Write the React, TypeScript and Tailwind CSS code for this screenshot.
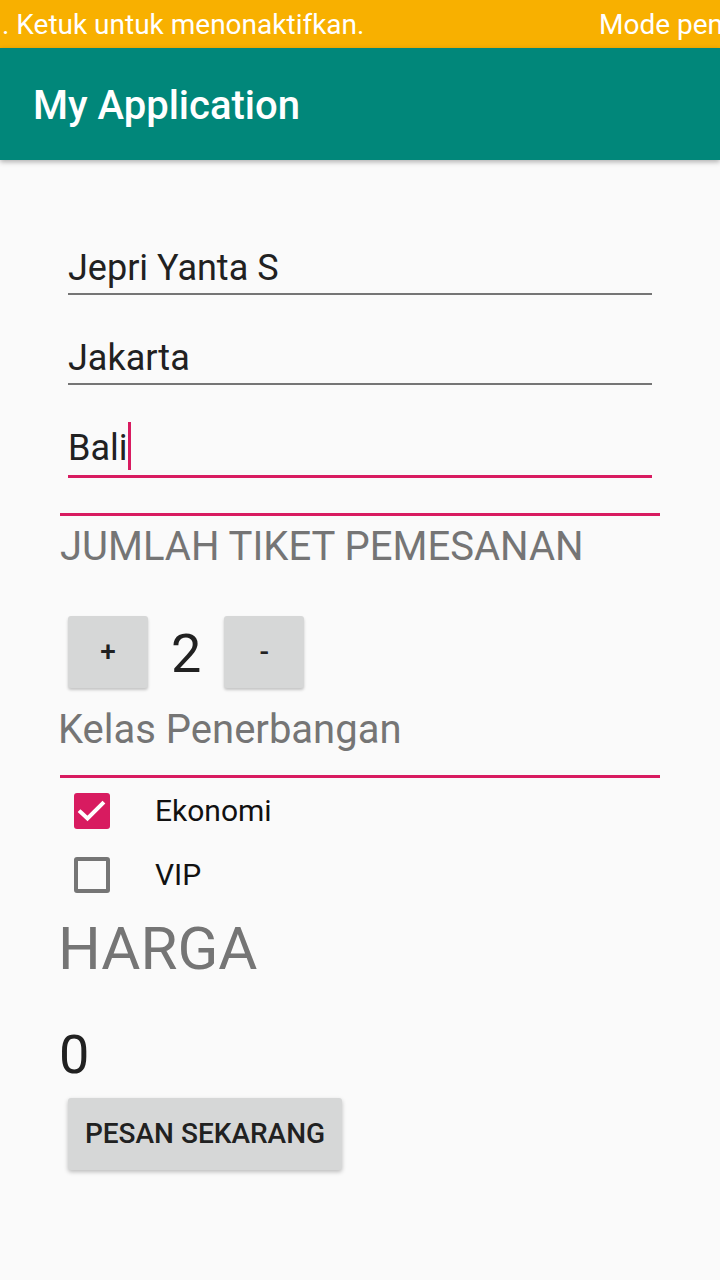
import React from 'react';

const Checkbox: React.FC<{ checked?: boolean }> = ({ checked }) =>
    checked ? (
        <div className="w-[36px] h-[36px] rounded-[3px] bg-[#D81B60] flex items-center justify-center">
            <svg width="36" height="36" viewBox="0 0 36 36" fill="none">
                <path d="M6.5 19 L13.5 25.5 L28.5 10.5" stroke="#FFFFFF" strokeWidth="4" strokeLinecap="square" />
            </svg>
        </div>
    ) : (
        <div className="w-[36px] h-[36px] rounded-[3px] border-[4px] border-[#757575]" />
    );

const App: React.FC = () => {
    return (
        <div className="w-[720px] h-[1280px] overflow-hidden bg-[#FAFAFA] font-[Roboto,'Noto_Sans',sans-serif]">
            {/* Status bar */}
            <div className="h-[48px] pt-[2px] bg-[#F8B000] text-white text-[28px] leading-[46px] whitespace-nowrap overflow-hidden flex">
                <span className="ml-[2px] w-[597px] shrink-0">. Ketuk untuk menonaktifkan.</span>
                <span>Mode penghemat baterai</span>
            </div>

            {/* App bar */}
            <div className="relative h-[112px] pt-[4px] bg-[#01877A] text-white text-[40px] font-medium leading-[108px] px-[33px] shadow-[0_2px_5px_rgba(0,0,0,0.3)]">
                My Application
            </div>

            {/* Form */}
            <div className="text-[36px] leading-none text-[#212121] ml-[68px] w-[584px] mt-[90px] pb-[7px] border-b-2 border-[#757575]">
                Jepri Yanta S
            </div>
            <div className="text-[36px] leading-none text-[#212121] ml-[68px] w-[584px] mt-[45px] pb-[7px] border-b-2 border-[#757575]">
                Jakarta
            </div>
            <div className="text-[36px] leading-none text-[#212121] ml-[68px] w-[584px] mt-[45px] pb-[9px] border-b-[3px] border-[#D81B60]">
                Bali
                <span className="inline-block align-top w-[3px] h-[48px] -mt-[8px] -mb-[4px] bg-[#D81B60]" />
            </div>

            <div className="ml-[60px] w-[600px] h-[3px] mt-[35px] bg-[#D81B60]" />

            <div className="ml-[60px] mt-[11px] text-[40px] leading-none text-[#757575] whitespace-nowrap">
                JUMLAH TIKET PEMESANAN
            </div>

            {/* Counter */}
            <div className="ml-[68px] mt-[49px] flex items-center">
                <button className="w-[80px] h-[72px] rounded-[3px] bg-[#D6D7D7] shadow-[0_2px_3px_rgba(0,0,0,0.22)] text-[28px] font-medium leading-none text-[#212121] flex items-center justify-center">
                    +
                </button>
                <span className="mx-[23px] mt-[3px] text-[54px] leading-none text-[#212121]">2</span>
                <button className="w-[80px] h-[72px] rounded-[3px] bg-[#D6D7D7] shadow-[0_2px_3px_rgba(0,0,0,0.22)] text-[28px] font-medium leading-none text-[#212121] flex items-center justify-center">
                    -
                </button>
            </div>

            <div className="ml-[58px] mt-[22px] text-[40px] leading-none text-[#757575]">Kelas Penerbangan</div>

            <div className="ml-[60px] w-[600px] h-[3px] mt-[25px] bg-[#D81B60]" />

            {/* Checkboxes */}
            <div className="mt-[1px] h-[64px] flex items-center ml-[74px]">
                <Checkbox checked />
                <span className="ml-[45px] text-[30px] leading-none text-[#111111]">Ekonomi</span>
            </div>
            <div className="h-[64px] flex items-center ml-[74px]">
                <Checkbox />
                <span className="ml-[45px] text-[30px] leading-none text-[#111111]">VIP</span>
            </div>

            <div className="ml-[58px] mt-[12px] text-[60px] leading-none text-[#757575]">HARGA</div>

            <div className="ml-[59px] mt-[49px] text-[54px] leading-none text-[#212121]">0</div>

            <button className="ml-[68px] mt-[16px] w-[274px] h-[72px] rounded-[3px] bg-[#D6D7D7] shadow-[0_2px_4px_rgba(0,0,0,0.25)] text-[28px] font-medium leading-none text-[#212121] flex items-center justify-center">
                PESAN SEKARANG
            </button>
        </div>
    );
};

export default App;
